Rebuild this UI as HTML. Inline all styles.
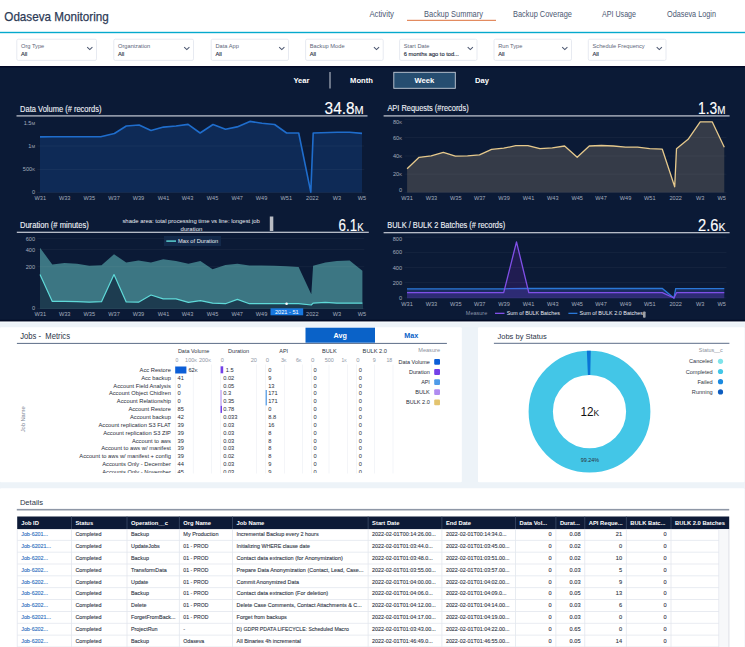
<!DOCTYPE html>
<html><head><meta charset="utf-8"><style>
html,body{margin:0;padding:0;width:745px;height:647px;overflow:hidden;background:#fff}
svg{position:absolute;left:0;top:0;font-family:"Liberation Sans", sans-serif}
</style></head><body>
<svg width="745" height="647" viewBox="0 0 745 647">
<rect x="0" y="0" width="745" height="66" fill="#ffffff"/>
<text x="4.3" y="21" font-size="13.4" fill="#2c3a56" text-anchor="start" font-weight="normal" stroke="#2c3a56" stroke-width="0.25" textLength="104.5" lengthAdjust="spacingAndGlyphs">Odaseva Monitoring</text>
<text x="369.4" y="17" font-size="8.2" fill="#4b5873" text-anchor="start" font-weight="normal"  textLength="24.6" lengthAdjust="spacingAndGlyphs">Activity</text>
<text x="424" y="17" font-size="8.2" fill="#4b5873" text-anchor="start" font-weight="normal"  textLength="59" lengthAdjust="spacingAndGlyphs">Backup Summary</text>
<text x="513" y="17" font-size="8.2" fill="#4b5873" text-anchor="start" font-weight="normal"  textLength="59" lengthAdjust="spacingAndGlyphs">Backup Coverage</text>
<text x="602" y="17" font-size="8.2" fill="#4b5873" text-anchor="start" font-weight="normal"  textLength="34" lengthAdjust="spacingAndGlyphs">API Usage</text>
<text x="667" y="17" font-size="8.2" fill="#4b5873" text-anchor="start" font-weight="normal"  textLength="49" lengthAdjust="spacingAndGlyphs">Odaseva Login</text>
<rect x="407" y="19.8" width="89" height="1.1" fill="#e07f4f"/>
<rect x="0" y="31.8" width="745" height="1.4" fill="#05a9cd"/>
<rect x="16.8" y="39.2" width="79.7" height="21.2" rx="1.5" fill="#fff" stroke="#e4e8ef" stroke-width="0.9"/>
<text x="21" y="48" font-size="5.7" fill="#5c6579" text-anchor="start" font-weight="normal" >Org Type</text>
<text x="21" y="55.6" font-size="5.7" fill="#2d3548" text-anchor="start" font-weight="normal" stroke="#2d3548" stroke-width="0.15">All</text>
<path d="M87.2 47.2 L89.8 49.6 L92.39999999999999 47.2" fill="none" stroke="#4b5670" stroke-width="1.05"/>
<rect x="113.8" y="39.2" width="79.7" height="21.2" rx="1.5" fill="#fff" stroke="#e4e8ef" stroke-width="0.9"/>
<text x="118" y="48" font-size="5.7" fill="#5c6579" text-anchor="start" font-weight="normal" >Organization</text>
<text x="118" y="55.6" font-size="5.7" fill="#2d3548" text-anchor="start" font-weight="normal" stroke="#2d3548" stroke-width="0.15">All</text>
<path d="M184.20000000000002 47.2 L186.8 49.6 L189.4 47.2" fill="none" stroke="#4b5670" stroke-width="1.05"/>
<rect x="211.20000000000002" y="39.2" width="77.3" height="21.2" rx="1.5" fill="#fff" stroke="#e4e8ef" stroke-width="0.9"/>
<text x="215.4" y="48" font-size="5.7" fill="#5c6579" text-anchor="start" font-weight="normal" >Data App</text>
<text x="215.4" y="55.6" font-size="5.7" fill="#2d3548" text-anchor="start" font-weight="normal" stroke="#2d3548" stroke-width="0.15">All</text>
<path d="M279.2 47.2 L281.8 49.6 L284.40000000000003 47.2" fill="none" stroke="#4b5670" stroke-width="1.05"/>
<rect x="305.6" y="39.2" width="77.59999999999998" height="21.2" rx="1.5" fill="#fff" stroke="#e4e8ef" stroke-width="0.9"/>
<text x="309.8" y="48" font-size="5.7" fill="#5c6579" text-anchor="start" font-weight="normal" >Backup Mode</text>
<text x="309.8" y="55.6" font-size="5.7" fill="#2d3548" text-anchor="start" font-weight="normal" stroke="#2d3548" stroke-width="0.15">All</text>
<path d="M373.9 47.2 L376.5 49.6 L379.1 47.2" fill="none" stroke="#4b5670" stroke-width="1.05"/>
<rect x="399.6" y="39.2" width="77.39999999999999" height="21.2" rx="1.5" fill="#fff" stroke="#e4e8ef" stroke-width="0.9"/>
<text x="403.8" y="48" font-size="5.7" fill="#5c6579" text-anchor="start" font-weight="normal" >Start Date</text>
<text x="403.8" y="55.6" font-size="5.7" fill="#2d3548" text-anchor="start" font-weight="normal" stroke="#2d3548" stroke-width="0.15">6 months ago to tod...</text>
<path d="M467.7 47.2 L470.3 49.6 L472.90000000000003 47.2" fill="none" stroke="#4b5670" stroke-width="1.05"/>
<rect x="494.0" y="39.2" width="77.50000000000001" height="21.2" rx="1.5" fill="#fff" stroke="#e4e8ef" stroke-width="0.9"/>
<text x="498.2" y="48" font-size="5.7" fill="#5c6579" text-anchor="start" font-weight="normal" >Run Type</text>
<text x="498.2" y="55.6" font-size="5.7" fill="#2d3548" text-anchor="start" font-weight="normal" stroke="#2d3548" stroke-width="0.15">All</text>
<path d="M562.1999999999999 47.2 L564.8 49.6 L567.4 47.2" fill="none" stroke="#4b5670" stroke-width="1.05"/>
<rect x="588.3" y="39.2" width="77.7" height="21.2" rx="1.5" fill="#fff" stroke="#e4e8ef" stroke-width="0.9"/>
<text x="592.5" y="48" font-size="5.7" fill="#5c6579" text-anchor="start" font-weight="normal" >Schedule Frequency</text>
<text x="592.5" y="55.6" font-size="5.7" fill="#2d3548" text-anchor="start" font-weight="normal" stroke="#2d3548" stroke-width="0.15">All</text>
<path d="M656.6999999999999 47.2 L659.3 49.6 L661.9 47.2" fill="none" stroke="#4b5670" stroke-width="1.05"/>
<rect x="0" y="66.5" width="745" height="255" fill="#0b1a36"/>
<rect x="0" y="66" width="745" height="1.5" fill="#020826"/>
<text x="301.5" y="82.8" font-size="7.6" fill="#ffffff" text-anchor="middle" font-weight="bold" >Year</text>
<rect x="329.5" y="72" width="1" height="16.5" fill="#c9ced8"/>
<text x="361.5" y="82.8" font-size="7.6" fill="#ffffff" text-anchor="middle" font-weight="bold" >Month</text>
<rect x="393.8" y="72.3" width="61.5" height="16" fill="#264d70" stroke="#c4ccd8" stroke-width="0.9"/>
<text x="424.3" y="82.8" font-size="7.6" fill="#ffffff" text-anchor="middle" font-weight="bold" >Week</text>
<text x="482" y="82.8" font-size="7.6" fill="#ffffff" text-anchor="middle" font-weight="bold" >Day</text>
<text x="20.1" y="111.5" font-size="8.2" fill="#eef1f6" text-anchor="start" font-weight="normal" stroke="#eef1f6" stroke-width="0.12" textLength="81.4" lengthAdjust="spacingAndGlyphs">Data Volume (# records)</text>
<text x="324.6" y="114" font-size="15.8" fill="#ffffff" text-anchor="start" font-weight="normal" stroke="#ffffff" stroke-width="0.15" textLength="39.1" lengthAdjust="spacingAndGlyphs">34.8<tspan font-size="11.2">M</tspan></text>
<rect x="16.5" y="115.3" width="351" height="1.2" fill="#c8ccd6"/>
<text x="35" y="124.5" font-size="5.6" fill="#a3acbd" text-anchor="end" font-weight="normal" >1.5<tspan font-size="4.3">M</tspan></text>
<text x="35" y="148" font-size="5.6" fill="#a3acbd" text-anchor="end" font-weight="normal" >1<tspan font-size="4.3">M</tspan></text>
<text x="35" y="171.3" font-size="5.6" fill="#a3acbd" text-anchor="end" font-weight="normal" >500<tspan font-size="4.3">K</tspan></text>
<text x="35" y="194.2" font-size="5.6" fill="#a3acbd" text-anchor="end" font-weight="normal" >0</text>
<text x="40.3" y="200" font-size="5.6" fill="#a3acbd" text-anchor="middle" font-weight="normal" >W31</text>
<text x="64.7" y="200" font-size="5.6" fill="#a3acbd" text-anchor="middle" font-weight="normal" >W33</text>
<text x="89.3" y="200" font-size="5.6" fill="#a3acbd" text-anchor="middle" font-weight="normal" >W35</text>
<text x="114" y="200" font-size="5.6" fill="#a3acbd" text-anchor="middle" font-weight="normal" >W37</text>
<text x="138.4" y="200" font-size="5.6" fill="#a3acbd" text-anchor="middle" font-weight="normal" >W39</text>
<text x="163.5" y="200" font-size="5.6" fill="#a3acbd" text-anchor="middle" font-weight="normal" >W41</text>
<text x="187.5" y="200" font-size="5.6" fill="#a3acbd" text-anchor="middle" font-weight="normal" >W43</text>
<text x="212.6" y="200" font-size="5.6" fill="#a3acbd" text-anchor="middle" font-weight="normal" >W45</text>
<text x="237.2" y="200" font-size="5.6" fill="#a3acbd" text-anchor="middle" font-weight="normal" >W47</text>
<text x="261.6" y="200" font-size="5.6" fill="#a3acbd" text-anchor="middle" font-weight="normal" >W49</text>
<text x="286.3" y="200" font-size="5.6" fill="#a3acbd" text-anchor="middle" font-weight="normal" >W51</text>
<text x="312.3" y="200" font-size="5.6" fill="#a3acbd" text-anchor="middle" font-weight="normal" >2022</text>
<text x="336.9" y="200" font-size="5.6" fill="#a3acbd" text-anchor="middle" font-weight="normal" >W3</text>
<text x="362" y="200" font-size="5.6" fill="#a3acbd" text-anchor="middle" font-weight="normal" >W5</text>
<polygon points="40.0,136.9 52.3,136.8 64.7,136.7 77.0,136.7 89.4,136.7 100.7,136.7 114.4,133.5 126.3,126.0 139.1,125.0 151.0,130.5 163.5,127.1 176.0,126.0 188.1,124.4 200.1,133.0 213.0,124.5 225.5,129.3 237.1,126.9 249.9,121.4 262.0,123.3 274.6,124.5 286.6,133.0 298.7,133.0 310.8,192.1 313.2,133.0 337.4,132.2 349.5,132.2 362.0,133.4 362,192.5 40,192.5" fill="#0e2a56"/>
<rect x="37.3" y="145.65" width="327" height="0.7" fill="#ffffff" fill-opacity="0.06"/>
<rect x="37.3" y="169.15" width="327" height="0.7" fill="#ffffff" fill-opacity="0.06"/>
<rect x="37.3" y="192.05" width="327" height="0.7" fill="#ffffff" fill-opacity="0.06"/>
<polyline points="40.0,136.9 52.3,136.8 64.7,136.7 77.0,136.7 89.4,136.7 100.7,136.7 114.4,133.5 126.3,126.0 139.1,125.0 151.0,130.5 163.5,127.1 176.0,126.0 188.1,124.4 200.1,133.0 213.0,124.5 225.5,129.3 237.1,126.9 249.9,121.4 262.0,123.3 274.6,124.5 286.6,133.0 298.7,133.0 310.8,192.1 313.2,133.0 337.4,132.2 349.5,132.2 362.0,133.4" fill="none" stroke="#1f6dcc" stroke-width="1.6" stroke-linejoin="round"/>
<text x="387.4" y="111.1" font-size="8.2" fill="#eef1f6" text-anchor="start" font-weight="normal" stroke="#eef1f6" stroke-width="0.12" textLength="81.3" lengthAdjust="spacingAndGlyphs">API Requests (#records)</text>
<text x="698" y="114" font-size="15.8" fill="#ffffff" text-anchor="start" font-weight="normal" stroke="#ffffff" stroke-width="0.15" textLength="27.4" lengthAdjust="spacingAndGlyphs">1.3<tspan font-size="11.2">M</tspan></text>
<rect x="383.6" y="115.3" width="346" height="1.2" fill="#c8ccd6"/>
<text x="402" y="124" font-size="5.6" fill="#a3acbd" text-anchor="end" font-weight="normal" >80<tspan font-size="4.3">K</tspan></text>
<text x="402" y="140" font-size="5.6" fill="#a3acbd" text-anchor="end" font-weight="normal" >60<tspan font-size="4.3">K</tspan></text>
<text x="402" y="158" font-size="5.6" fill="#a3acbd" text-anchor="end" font-weight="normal" >40<tspan font-size="4.3">K</tspan></text>
<text x="402" y="176.3" font-size="5.6" fill="#a3acbd" text-anchor="end" font-weight="normal" >20<tspan font-size="4.3">K</tspan></text>
<text x="402" y="191.8" font-size="5.6" fill="#a3acbd" text-anchor="end" font-weight="normal" >0</text>
<text x="407.1" y="200" font-size="5.6" fill="#a3acbd" text-anchor="middle" font-weight="normal" >W31</text>
<text x="431.4" y="200" font-size="5.6" fill="#a3acbd" text-anchor="middle" font-weight="normal" >W33</text>
<text x="455.8" y="200" font-size="5.6" fill="#a3acbd" text-anchor="middle" font-weight="normal" >W35</text>
<text x="479.7" y="200" font-size="5.6" fill="#a3acbd" text-anchor="middle" font-weight="normal" >W37</text>
<text x="504.1" y="200" font-size="5.6" fill="#a3acbd" text-anchor="middle" font-weight="normal" >W39</text>
<text x="528.5" y="200" font-size="5.6" fill="#a3acbd" text-anchor="middle" font-weight="normal" >W41</text>
<text x="552.8" y="200" font-size="5.6" fill="#a3acbd" text-anchor="middle" font-weight="normal" >W43</text>
<text x="577.2" y="200" font-size="5.6" fill="#a3acbd" text-anchor="middle" font-weight="normal" >W45</text>
<text x="601.1" y="200" font-size="5.6" fill="#a3acbd" text-anchor="middle" font-weight="normal" >W47</text>
<text x="625.5" y="200" font-size="5.6" fill="#a3acbd" text-anchor="middle" font-weight="normal" >W49</text>
<text x="649.8" y="200" font-size="5.6" fill="#a3acbd" text-anchor="middle" font-weight="normal" >W51</text>
<text x="675.7" y="200" font-size="5.6" fill="#a3acbd" text-anchor="middle" font-weight="normal" >2022</text>
<text x="700.1" y="200" font-size="5.6" fill="#a3acbd" text-anchor="middle" font-weight="normal" >W3</text>
<text x="721.8" y="200" font-size="5.6" fill="#a3acbd" text-anchor="middle" font-weight="normal" >W5</text>
<polygon points="407.1,168.7 419.1,157.3 431.2,155.9 443.3,152.3 455.4,156.1 467.5,155.9 479.5,154.9 491.6,149.4 503.7,148.2 515.8,145.7 527.9,145.7 539.9,148.6 552.3,147.9 564.6,146.0 577.2,157.3 589.3,146.0 601.4,145.5 613.5,146.0 625.5,147.1 637.6,147.1 649.7,148.7 662.3,149.2 674.7,186.8 676.5,148.7 688.1,139.3 700.2,121.8 712.2,121.8 724.3,147.3 724.3,192.5 407.1,192.5" fill="#353b48"/>
<rect x="404.5" y="118.85000000000001" width="322" height="0.7" fill="#ffffff" fill-opacity="0.06"/>
<rect x="404.5" y="137.15" width="322" height="0.7" fill="#ffffff" fill-opacity="0.06"/>
<rect x="404.5" y="155.65" width="322" height="0.7" fill="#ffffff" fill-opacity="0.06"/>
<rect x="404.5" y="173.75" width="322" height="0.7" fill="#ffffff" fill-opacity="0.06"/>
<rect x="404.5" y="191.85" width="322" height="0.7" fill="#ffffff" fill-opacity="0.06"/>
<polyline points="407.1,168.7 419.1,157.3 431.2,155.9 443.3,152.3 455.4,156.1 467.5,155.9 479.5,154.9 491.6,149.4 503.7,148.2 515.8,145.7 527.9,145.7 539.9,148.6 552.3,147.9 564.6,146.0 577.2,157.3 589.3,146.0 601.4,145.5 613.5,146.0 625.5,147.1 637.6,147.1 649.7,148.7 662.3,149.2 674.7,186.8 676.5,148.7 688.1,139.3 700.2,121.8 712.2,121.8 724.3,147.3" fill="none" stroke="#e6c98c" stroke-width="1.3" stroke-linejoin="round"/>
<text x="19.9" y="228" font-size="8.2" fill="#eef1f6" text-anchor="start" font-weight="normal" stroke="#eef1f6" stroke-width="0.12" textLength="68.9" lengthAdjust="spacingAndGlyphs">Duration (# minutes)</text>
<text x="338.6" y="230.5" font-size="15.8" fill="#ffffff" text-anchor="start" font-weight="normal" stroke="#ffffff" stroke-width="0.15" textLength="25" lengthAdjust="spacingAndGlyphs">6.1<tspan font-size="11.2">K</tspan></text>
<rect x="16.8" y="231.7" width="352" height="1.2" fill="#c8ccd6"/>
<text x="122.4" y="222.8" font-size="5.8" fill="#e8ebf1" text-anchor="start" font-weight="normal"  textLength="137.4" lengthAdjust="spacingAndGlyphs">shade area: total processing time vs line: longest job</text>
<text x="180.6" y="230.7" font-size="5.8" fill="#e8ebf1" text-anchor="start" font-weight="normal"  textLength="21.8" lengthAdjust="spacingAndGlyphs">duration</text>
<rect x="269.8" y="216.5" width="3.5" height="14.5" fill="#b9bcc4"/>
<text x="35" y="240.5" font-size="5.6" fill="#a3acbd" text-anchor="end" font-weight="normal" >600</text>
<text x="35" y="251.8" font-size="5.6" fill="#a3acbd" text-anchor="end" font-weight="normal" >400</text>
<text x="35" y="268.9" font-size="5.6" fill="#a3acbd" text-anchor="end" font-weight="normal" >200</text>
<text x="35" y="310" font-size="5.6" fill="#a3acbd" text-anchor="end" font-weight="normal" >0</text>
<text x="40.3" y="316.3" font-size="5.6" fill="#a3acbd" text-anchor="middle" font-weight="normal" >W31</text>
<text x="64.7" y="316.3" font-size="5.6" fill="#a3acbd" text-anchor="middle" font-weight="normal" >W33</text>
<text x="89.3" y="316.3" font-size="5.6" fill="#a3acbd" text-anchor="middle" font-weight="normal" >W35</text>
<text x="114" y="316.3" font-size="5.6" fill="#a3acbd" text-anchor="middle" font-weight="normal" >W37</text>
<text x="138.4" y="316.3" font-size="5.6" fill="#a3acbd" text-anchor="middle" font-weight="normal" >W39</text>
<text x="163.5" y="316.3" font-size="5.6" fill="#a3acbd" text-anchor="middle" font-weight="normal" >W41</text>
<text x="187.5" y="316.3" font-size="5.6" fill="#a3acbd" text-anchor="middle" font-weight="normal" >W43</text>
<text x="212.6" y="316.3" font-size="5.6" fill="#a3acbd" text-anchor="middle" font-weight="normal" >W45</text>
<text x="237.2" y="316.3" font-size="5.6" fill="#a3acbd" text-anchor="middle" font-weight="normal" >W47</text>
<text x="261.6" y="316.3" font-size="5.6" fill="#a3acbd" text-anchor="middle" font-weight="normal" >W49</text>
<text x="312.3" y="316.3" font-size="5.6" fill="#a3acbd" text-anchor="middle" font-weight="normal" >2022</text>
<text x="336.9" y="316.3" font-size="5.6" fill="#a3acbd" text-anchor="middle" font-weight="normal" >W3</text>
<text x="362" y="316.3" font-size="5.6" fill="#a3acbd" text-anchor="middle" font-weight="normal" >W5</text>
<polygon points="40.0,247.8 52.3,264.4 64.5,263.1 77.0,263.7 89.3,265.7 101.5,265.2 114.0,254.2 126.2,262.4 138.5,260.6 151.0,262.4 163.2,259.3 176.0,261.1 188.4,263.7 200.4,261.1 212.6,269.3 225.4,265.0 237.4,263.7 249.4,265.4 261.6,265.4 274.4,265.7 286.6,266.2 298.6,267.0 311.3,294.3 313.1,265.7 325.4,262.4 336.8,261.1 349.6,260.6 362.4,270.8 362.4,309 40,309" fill="#3c7683"/>
<polygon points="40.0,274.6 52.3,301.4 64.5,301.4 77.0,301.7 89.3,302.2 101.5,301.7 114.0,274.6 126.2,301.9 138.5,302.2 151.0,295.0 163.2,298.9 176.0,298.9 188.4,302.4 200.4,300.6 212.6,303.2 225.4,303.7 237.4,299.4 249.4,303.7 261.6,303.7 274.4,303.7 286.6,303.7 298.6,303.7 311.3,305.0 313.1,303.2 325.4,302.4 336.8,303.2 349.6,303.2 362.4,303.2 362.4,309 40,309" fill="#1d3c50"/>
<rect x="37.3" y="237.95000000000002" width="327" height="0.7" fill="#ffffff" fill-opacity="0.06"/>
<rect x="37.3" y="249.25" width="327" height="0.7" fill="#ffffff" fill-opacity="0.06"/>
<rect x="37.3" y="266.45" width="327" height="0.7" fill="#ffffff" fill-opacity="0.06"/>
<rect x="37.3" y="308.25" width="327" height="0.7" fill="#ffffff" fill-opacity="0.06"/>
<polyline points="40.0,274.6 52.3,301.4 64.5,301.4 77.0,301.7 89.3,302.2 101.5,301.7 114.0,274.6 126.2,301.9 138.5,302.2 151.0,295.0 163.2,298.9 176.0,298.9 188.4,302.4 200.4,300.6 212.6,303.2 225.4,303.7 237.4,299.4 249.4,303.7 261.6,303.7 274.4,303.7 286.6,303.7 298.6,303.7 311.3,305.0 313.1,303.2 325.4,302.4 336.8,303.2 349.6,303.2 362.4,303.2" fill="none" stroke="#5fdad9" stroke-width="1.2" stroke-linejoin="round"/>
<circle cx="286.6" cy="303.7" r="1.3" fill="#ffffff"/>
<rect x="164" y="236" width="57" height="10" fill="#13294a"/>
<rect x="166.3" y="240.4" width="9.7" height="1.4" fill="#5fdad9"/>
<text x="178" y="243" font-size="5.8" fill="#e8ebf1" text-anchor="start" font-weight="normal"  textLength="40.3" lengthAdjust="spacingAndGlyphs">Max of Duration</text>
<rect x="270.5" y="308.3" width="32.7" height="7" fill="#1778e0"/>
<text x="286.8" y="313.9" font-size="5.6" fill="#ffffff" text-anchor="middle" font-weight="normal" >2021 - 51</text>
<text x="387.2" y="228.1" font-size="8.2" fill="#eef1f6" text-anchor="start" font-weight="normal" stroke="#eef1f6" stroke-width="0.12" textLength="118" lengthAdjust="spacingAndGlyphs">BULK / BULK 2 Batches (# records)</text>
<text x="698" y="230.7" font-size="15.8" fill="#ffffff" text-anchor="start" font-weight="normal" stroke="#ffffff" stroke-width="0.15" textLength="27.4" lengthAdjust="spacingAndGlyphs">2.6<tspan font-size="11.2">K</tspan></text>
<rect x="383.6" y="232.1" width="346" height="1.2" fill="#c8ccd6"/>
<text x="402" y="240.5" font-size="5.6" fill="#a3acbd" text-anchor="end" font-weight="normal" >800</text>
<text x="402" y="253.8" font-size="5.6" fill="#a3acbd" text-anchor="end" font-weight="normal" >600</text>
<text x="402" y="269.5" font-size="5.6" fill="#a3acbd" text-anchor="end" font-weight="normal" >400</text>
<text x="402" y="285" font-size="5.6" fill="#a3acbd" text-anchor="end" font-weight="normal" >200</text>
<text x="402" y="299.5" font-size="5.6" fill="#a3acbd" text-anchor="end" font-weight="normal" >0</text>
<text x="407.1" y="305.5" font-size="5.6" fill="#a3acbd" text-anchor="middle" font-weight="normal" >W31</text>
<text x="431.4" y="305.5" font-size="5.6" fill="#a3acbd" text-anchor="middle" font-weight="normal" >W33</text>
<text x="455.8" y="305.5" font-size="5.6" fill="#a3acbd" text-anchor="middle" font-weight="normal" >W35</text>
<text x="479.7" y="305.5" font-size="5.6" fill="#a3acbd" text-anchor="middle" font-weight="normal" >W37</text>
<text x="504.1" y="305.5" font-size="5.6" fill="#a3acbd" text-anchor="middle" font-weight="normal" >W39</text>
<text x="528.5" y="305.5" font-size="5.6" fill="#a3acbd" text-anchor="middle" font-weight="normal" >W41</text>
<text x="552.8" y="305.5" font-size="5.6" fill="#a3acbd" text-anchor="middle" font-weight="normal" >W43</text>
<text x="577.2" y="305.5" font-size="5.6" fill="#a3acbd" text-anchor="middle" font-weight="normal" >W45</text>
<text x="601.1" y="305.5" font-size="5.6" fill="#a3acbd" text-anchor="middle" font-weight="normal" >W47</text>
<text x="625.5" y="305.5" font-size="5.6" fill="#a3acbd" text-anchor="middle" font-weight="normal" >W49</text>
<text x="649.8" y="305.5" font-size="5.6" fill="#a3acbd" text-anchor="middle" font-weight="normal" >W51</text>
<text x="675.7" y="305.5" font-size="5.6" fill="#a3acbd" text-anchor="middle" font-weight="normal" >2022</text>
<text x="700.1" y="305.5" font-size="5.6" fill="#a3acbd" text-anchor="middle" font-weight="normal" >W3</text>
<text x="721.8" y="305.5" font-size="5.6" fill="#a3acbd" text-anchor="middle" font-weight="normal" >W5</text>
<polygon points="407.0,288.8 503.7,288.8 527.9,288.3 662.3,288.5 673.9,298.0 675.7,288.7 724.3,288.7 724.3,298.2 407,298.2" fill="#1a2c5e"/>
<polyline points="407.0,288.8 503.7,288.8 527.9,288.3 662.3,288.5 673.9,298.0 675.7,288.7 724.3,288.7" fill="none" stroke="#2a78d8" stroke-width="1.3"/>
<polygon points="407.0,292.6 503.7,292.6 516.5,241.9 528.8,292.6 662.3,292.6 673.9,298.0 676.5,292.7 724.3,292.7 724.3,298.2 407,298.2" fill="#9a28f0" fill-opacity="0.15"/>
<rect x="404.5" y="236.75" width="322" height="0.7" fill="#ffffff" fill-opacity="0.06"/>
<rect x="404.5" y="251.95000000000002" width="322" height="0.7" fill="#ffffff" fill-opacity="0.06"/>
<rect x="404.5" y="267.15" width="322" height="0.7" fill="#ffffff" fill-opacity="0.06"/>
<rect x="404.5" y="282.34999999999997" width="322" height="0.7" fill="#ffffff" fill-opacity="0.06"/>
<rect x="404.5" y="297.54999999999995" width="322" height="0.7" fill="#ffffff" fill-opacity="0.06"/>
<polyline points="407.0,292.6 503.7,292.6 516.5,241.9 528.8,292.6 662.3,292.6 673.9,298.0 676.5,292.7 724.3,292.7" fill="none" stroke="#8050e8" stroke-width="1.3" stroke-linejoin="round"/>
<text x="476.5" y="315.3" font-size="5.5" fill="#8a93a8" text-anchor="middle" font-weight="normal" >Measure</text>
<rect x="495" y="312.7" width="9.5" height="1.3" fill="#8050e8"/>
<text x="506.8" y="315.3" font-size="5.6" fill="#e8ebf1" text-anchor="start" font-weight="normal"  textLength="53" lengthAdjust="spacingAndGlyphs">Sum of BULK Batches</text>
<rect x="568.4" y="312.7" width="9" height="1.3" fill="#2a78d8"/>
<text x="579.5" y="315.3" font-size="5.6" fill="#e8ebf1" text-anchor="start" font-weight="normal"  textLength="63.5" lengthAdjust="spacingAndGlyphs">Sum of BULK 2.0 Batches</text>
<rect x="643" y="311.5" width="2.6" height="6.2" rx="0.8" fill="#9ea2aa"/>
<rect x="0" y="321.4" width="745" height="325.6" fill="#edf3f8"/>
<rect x="0" y="321.4" width="745" height="1" fill="#ffffff"/>
<rect x="0" y="319.8" width="745" height="1.6" fill="#030b24"/>
<rect x="0" y="327.3" width="461.8" height="154.9" rx="1" fill="#ffffff"/>
<rect x="478" y="327.3" width="266.5" height="154.9" rx="1" fill="#ffffff"/>
<rect x="0" y="488.2" width="744.5" height="160" rx="1" fill="#ffffff"/>
<text x="20.3" y="338.6" font-size="8.2" fill="#2c3548" text-anchor="start" font-weight="normal"  textLength="49.7" lengthAdjust="spacingAndGlyphs">Jobs -&#160; Metrics</text>
<rect x="16.9" y="342.9" width="430" height="1" fill="#5c6d88"/>
<rect x="305.5" y="327.7" width="69.5" height="15" fill="#0a62c8"/>
<text x="340.2" y="337.6" font-size="7.2" fill="#ffffff" text-anchor="middle" font-weight="bold" >Avg</text>
<text x="411.3" y="337.6" font-size="7.2" fill="#0a62c8" text-anchor="middle" font-weight="bold" >Max</text>
<text x="177.9" y="352.9" font-size="5.6" fill="#2f3645" text-anchor="start" font-weight="normal"  textLength="31.4" lengthAdjust="spacingAndGlyphs">Data Volume</text>
<rect x="174.89999999999998" y="364.5" width="0.6" height="109" fill="#eceef3"/>
<rect x="192.89999999999998" y="364.5" width="0.6" height="109" fill="#eceef3"/>
<rect x="211.39999999999998" y="364.5" width="0.6" height="109" fill="#eceef3"/>
<text x="228" y="352.9" font-size="5.6" fill="#2f3645" text-anchor="start" font-weight="normal"  textLength="21.1" lengthAdjust="spacingAndGlyphs">Duration</text>
<rect x="220.2" y="364.5" width="0.6" height="109" fill="#eceef3"/>
<rect x="256.3" y="364.5" width="0.6" height="109" fill="#eceef3"/>
<text x="279.3" y="352.9" font-size="5.6" fill="#2f3645" text-anchor="start" font-weight="normal"  textLength="8.8" lengthAdjust="spacingAndGlyphs">API</text>
<rect x="265.4" y="364.5" width="0.6" height="109" fill="#eceef3"/>
<rect x="284.3" y="364.5" width="0.6" height="109" fill="#eceef3"/>
<rect x="302.2" y="364.5" width="0.6" height="109" fill="#eceef3"/>
<text x="322.1" y="352.9" font-size="5.6" fill="#2f3645" text-anchor="start" font-weight="normal"  textLength="14.6" lengthAdjust="spacingAndGlyphs">BULK</text>
<rect x="311.2" y="364.5" width="0.6" height="109" fill="#eceef3"/>
<rect x="328.7" y="364.5" width="0.6" height="109" fill="#eceef3"/>
<rect x="347.3" y="364.5" width="0.6" height="109" fill="#eceef3"/>
<text x="362.6" y="352.9" font-size="5.6" fill="#2f3645" text-anchor="start" font-weight="normal"  textLength="24.4" lengthAdjust="spacingAndGlyphs">BULK 2.0</text>
<rect x="356.2" y="364.5" width="0.6" height="109" fill="#eceef3"/>
<rect x="374.4" y="364.5" width="0.6" height="109" fill="#eceef3"/>
<rect x="392.7" y="364.5" width="0.6" height="109" fill="#eceef3"/>
<text x="175.4" y="362.3" font-size="5.3" fill="#8e96a5" text-anchor="start" font-weight="normal"  textLength="2.8" lengthAdjust="spacingAndGlyphs">0</text>
<text x="185.1" y="362.3" font-size="5.3" fill="#8e96a5" text-anchor="start" font-weight="normal"  textLength="12.1" lengthAdjust="spacingAndGlyphs">100<tspan font-size="4.2">K</tspan></text>
<text x="199" y="362.3" font-size="5.3" fill="#8e96a5" text-anchor="start" font-weight="normal"  textLength="12.1" lengthAdjust="spacingAndGlyphs">200<tspan font-size="4.2">K</tspan></text>
<text x="220.7" y="362.3" font-size="5.3" fill="#8e96a5" text-anchor="start" font-weight="normal"  textLength="3.1" lengthAdjust="spacingAndGlyphs">0</text>
<text x="250.7" y="362.3" font-size="5.3" fill="#8e96a5" text-anchor="start" font-weight="normal"  textLength="6.3" lengthAdjust="spacingAndGlyphs">20</text>
<text x="265.7" y="362.3" font-size="5.3" fill="#8e96a5" text-anchor="start" font-weight="normal"  textLength="3.3" lengthAdjust="spacingAndGlyphs">0</text>
<text x="280.9" y="362.3" font-size="5.3" fill="#8e96a5" text-anchor="start" font-weight="normal"  textLength="5.8" lengthAdjust="spacingAndGlyphs">3<tspan font-size="4.2">K</tspan></text>
<text x="295.9" y="362.3" font-size="5.3" fill="#8e96a5" text-anchor="start" font-weight="normal"  textLength="5.8" lengthAdjust="spacingAndGlyphs">6<tspan font-size="4.2">K</tspan></text>
<text x="311" y="362.3" font-size="5.3" fill="#8e96a5" text-anchor="start" font-weight="normal"  textLength="3.4" lengthAdjust="spacingAndGlyphs">0</text>
<text x="324.7" y="362.3" font-size="5.3" fill="#8e96a5" text-anchor="start" font-weight="normal"  textLength="9.1" lengthAdjust="spacingAndGlyphs">500</text>
<text x="341.6" y="362.3" font-size="5.3" fill="#8e96a5" text-anchor="start" font-weight="normal"  textLength="5.3" lengthAdjust="spacingAndGlyphs">1<tspan font-size="4.2">K</tspan></text>
<text x="356.2" y="362.3" font-size="5.3" fill="#8e96a5" text-anchor="start" font-weight="normal"  textLength="3.3" lengthAdjust="spacingAndGlyphs">0</text>
<text x="372.7" y="362.3" font-size="5.3" fill="#8e96a5" text-anchor="start" font-weight="normal"  textLength="3" lengthAdjust="spacingAndGlyphs">9</text>
<text x="386.4" y="362.3" font-size="5.3" fill="#8e96a5" text-anchor="start" font-weight="normal"  textLength="5.8" lengthAdjust="spacingAndGlyphs">18</text>
<defs><clipPath id="mclip"><rect x="0" y="364" width="460" height="109"/></clipPath></defs>
<g clip-path="url(#mclip)">
<text x="170.9" y="371.85" font-size="5.75" fill="#282d38" text-anchor="end" font-weight="normal" >Acc Restore</text>
<text x="188.4" y="371.85" font-size="5.7" fill="#282d38" text-anchor="start" font-weight="normal" >62<tspan font-size="4.4">K</tspan></text>
<text x="225.8" y="371.85" font-size="5.7" fill="#282d38" text-anchor="start" font-weight="normal" >1.5</text>
<text x="268.2" y="371.85" font-size="5.7" fill="#282d38" text-anchor="start" font-weight="normal" >0</text>
<text x="313.4" y="371.85" font-size="5.7" fill="#282d38" text-anchor="start" font-weight="normal" >0</text>
<text x="358.7" y="371.85" font-size="5.7" fill="#282d38" text-anchor="start" font-weight="normal" >0</text>
<text x="170.9" y="379.70000000000005" font-size="5.75" fill="#282d38" text-anchor="end" font-weight="normal" >Acc backup</text>
<text x="177.5" y="379.70000000000005" font-size="5.7" fill="#282d38" text-anchor="start" font-weight="normal" >41</text>
<text x="223.2" y="379.70000000000005" font-size="5.7" fill="#282d38" text-anchor="start" font-weight="normal" >0.02</text>
<text x="268.2" y="379.70000000000005" font-size="5.7" fill="#282d38" text-anchor="start" font-weight="normal" >9</text>
<text x="313.4" y="379.70000000000005" font-size="5.7" fill="#282d38" text-anchor="start" font-weight="normal" >0</text>
<text x="358.7" y="379.70000000000005" font-size="5.7" fill="#282d38" text-anchor="start" font-weight="normal" >0</text>
<text x="170.9" y="387.55" font-size="5.75" fill="#282d38" text-anchor="end" font-weight="normal" >Account Field Analysis</text>
<text x="177.5" y="387.55" font-size="5.7" fill="#282d38" text-anchor="start" font-weight="normal" >0</text>
<text x="223.2" y="387.55" font-size="5.7" fill="#282d38" text-anchor="start" font-weight="normal" >0.05</text>
<text x="268.2" y="387.55" font-size="5.7" fill="#282d38" text-anchor="start" font-weight="normal" >13</text>
<text x="313.4" y="387.55" font-size="5.7" fill="#282d38" text-anchor="start" font-weight="normal" >0</text>
<text x="358.7" y="387.55" font-size="5.7" fill="#282d38" text-anchor="start" font-weight="normal" >0</text>
<text x="170.9" y="395.40000000000003" font-size="5.75" fill="#282d38" text-anchor="end" font-weight="normal" >Account Object Chidlren</text>
<text x="177.5" y="395.40000000000003" font-size="5.7" fill="#282d38" text-anchor="start" font-weight="normal" >0</text>
<text x="223.2" y="395.40000000000003" font-size="5.7" fill="#282d38" text-anchor="start" font-weight="normal" >0.3</text>
<text x="268.2" y="395.40000000000003" font-size="5.7" fill="#282d38" text-anchor="start" font-weight="normal" >171</text>
<text x="313.4" y="395.40000000000003" font-size="5.7" fill="#282d38" text-anchor="start" font-weight="normal" >0</text>
<text x="358.7" y="395.40000000000003" font-size="5.7" fill="#282d38" text-anchor="start" font-weight="normal" >0</text>
<text x="170.9" y="403.25" font-size="5.75" fill="#282d38" text-anchor="end" font-weight="normal" >Account Relationship</text>
<text x="177.5" y="403.25" font-size="5.7" fill="#282d38" text-anchor="start" font-weight="normal" >0</text>
<text x="223.2" y="403.25" font-size="5.7" fill="#282d38" text-anchor="start" font-weight="normal" >0.35</text>
<text x="268.2" y="403.25" font-size="5.7" fill="#282d38" text-anchor="start" font-weight="normal" >171</text>
<text x="313.4" y="403.25" font-size="5.7" fill="#282d38" text-anchor="start" font-weight="normal" >0</text>
<text x="358.7" y="403.25" font-size="5.7" fill="#282d38" text-anchor="start" font-weight="normal" >0</text>
<text x="170.9" y="411.1" font-size="5.75" fill="#282d38" text-anchor="end" font-weight="normal" >Account Restore</text>
<text x="177.5" y="411.1" font-size="5.7" fill="#282d38" text-anchor="start" font-weight="normal" >85</text>
<text x="223.2" y="411.1" font-size="5.7" fill="#282d38" text-anchor="start" font-weight="normal" >0.78</text>
<text x="268.2" y="411.1" font-size="5.7" fill="#282d38" text-anchor="start" font-weight="normal" >0</text>
<text x="313.4" y="411.1" font-size="5.7" fill="#282d38" text-anchor="start" font-weight="normal" >0</text>
<text x="358.7" y="411.1" font-size="5.7" fill="#282d38" text-anchor="start" font-weight="normal" >0</text>
<text x="170.9" y="418.95" font-size="5.75" fill="#282d38" text-anchor="end" font-weight="normal" >Account backup</text>
<text x="177.5" y="418.95" font-size="5.7" fill="#282d38" text-anchor="start" font-weight="normal" >42</text>
<text x="223.2" y="418.95" font-size="5.7" fill="#282d38" text-anchor="start" font-weight="normal" >0.033</text>
<text x="268.2" y="418.95" font-size="5.7" fill="#282d38" text-anchor="start" font-weight="normal" >8.8</text>
<text x="313.4" y="418.95" font-size="5.7" fill="#282d38" text-anchor="start" font-weight="normal" >0</text>
<text x="358.7" y="418.95" font-size="5.7" fill="#282d38" text-anchor="start" font-weight="normal" >0</text>
<text x="170.9" y="426.8" font-size="5.75" fill="#282d38" text-anchor="end" font-weight="normal" >Account replication S3 FLAT</text>
<text x="177.5" y="426.8" font-size="5.7" fill="#282d38" text-anchor="start" font-weight="normal" >39</text>
<text x="223.2" y="426.8" font-size="5.7" fill="#282d38" text-anchor="start" font-weight="normal" >0.03</text>
<text x="268.2" y="426.8" font-size="5.7" fill="#282d38" text-anchor="start" font-weight="normal" >16</text>
<text x="313.4" y="426.8" font-size="5.7" fill="#282d38" text-anchor="start" font-weight="normal" >0</text>
<text x="358.7" y="426.8" font-size="5.7" fill="#282d38" text-anchor="start" font-weight="normal" >0</text>
<text x="170.9" y="434.65000000000003" font-size="5.75" fill="#282d38" text-anchor="end" font-weight="normal" >Account replication S3 ZIP</text>
<text x="177.5" y="434.65000000000003" font-size="5.7" fill="#282d38" text-anchor="start" font-weight="normal" >39</text>
<text x="223.2" y="434.65000000000003" font-size="5.7" fill="#282d38" text-anchor="start" font-weight="normal" >0.03</text>
<text x="268.2" y="434.65000000000003" font-size="5.7" fill="#282d38" text-anchor="start" font-weight="normal" >8</text>
<text x="313.4" y="434.65000000000003" font-size="5.7" fill="#282d38" text-anchor="start" font-weight="normal" >0</text>
<text x="358.7" y="434.65000000000003" font-size="5.7" fill="#282d38" text-anchor="start" font-weight="normal" >0</text>
<text x="170.9" y="442.5" font-size="5.75" fill="#282d38" text-anchor="end" font-weight="normal" >Account to aws</text>
<text x="177.5" y="442.5" font-size="5.7" fill="#282d38" text-anchor="start" font-weight="normal" >39</text>
<text x="223.2" y="442.5" font-size="5.7" fill="#282d38" text-anchor="start" font-weight="normal" >0.03</text>
<text x="268.2" y="442.5" font-size="5.7" fill="#282d38" text-anchor="start" font-weight="normal" >8</text>
<text x="313.4" y="442.5" font-size="5.7" fill="#282d38" text-anchor="start" font-weight="normal" >0</text>
<text x="358.7" y="442.5" font-size="5.7" fill="#282d38" text-anchor="start" font-weight="normal" >0</text>
<text x="170.9" y="450.35" font-size="5.75" fill="#282d38" text-anchor="end" font-weight="normal" >Account to aws w/ manifest</text>
<text x="177.5" y="450.35" font-size="5.7" fill="#282d38" text-anchor="start" font-weight="normal" >39</text>
<text x="223.2" y="450.35" font-size="5.7" fill="#282d38" text-anchor="start" font-weight="normal" >0.03</text>
<text x="268.2" y="450.35" font-size="5.7" fill="#282d38" text-anchor="start" font-weight="normal" >8</text>
<text x="313.4" y="450.35" font-size="5.7" fill="#282d38" text-anchor="start" font-weight="normal" >0</text>
<text x="358.7" y="450.35" font-size="5.7" fill="#282d38" text-anchor="start" font-weight="normal" >0</text>
<text x="170.9" y="458.2" font-size="5.75" fill="#282d38" text-anchor="end" font-weight="normal" >Account to aws w/ manifest + config</text>
<text x="177.5" y="458.2" font-size="5.7" fill="#282d38" text-anchor="start" font-weight="normal" >39</text>
<text x="223.2" y="458.2" font-size="5.7" fill="#282d38" text-anchor="start" font-weight="normal" >0.02</text>
<text x="268.2" y="458.2" font-size="5.7" fill="#282d38" text-anchor="start" font-weight="normal" >8</text>
<text x="313.4" y="458.2" font-size="5.7" fill="#282d38" text-anchor="start" font-weight="normal" >0</text>
<text x="358.7" y="458.2" font-size="5.7" fill="#282d38" text-anchor="start" font-weight="normal" >0</text>
<text x="170.9" y="466.05" font-size="5.75" fill="#282d38" text-anchor="end" font-weight="normal" >Accounts Only - December</text>
<text x="177.5" y="466.05" font-size="5.7" fill="#282d38" text-anchor="start" font-weight="normal" >44</text>
<text x="223.2" y="466.05" font-size="5.7" fill="#282d38" text-anchor="start" font-weight="normal" >0.03</text>
<text x="268.2" y="466.05" font-size="5.7" fill="#282d38" text-anchor="start" font-weight="normal" >9</text>
<text x="313.4" y="466.05" font-size="5.7" fill="#282d38" text-anchor="start" font-weight="normal" >0</text>
<text x="358.7" y="466.05" font-size="5.7" fill="#282d38" text-anchor="start" font-weight="normal" >0</text>
<text x="170.9" y="473.90000000000003" font-size="5.75" fill="#282d38" text-anchor="end" font-weight="normal" >Accounts Only - November</text>
<text x="177.5" y="473.90000000000003" font-size="5.7" fill="#282d38" text-anchor="start" font-weight="normal" >45</text>
<text x="223.2" y="473.90000000000003" font-size="5.7" fill="#282d38" text-anchor="start" font-weight="normal" >0.03</text>
<text x="268.2" y="473.90000000000003" font-size="5.7" fill="#282d38" text-anchor="start" font-weight="normal" >9</text>
<text x="313.4" y="473.90000000000003" font-size="5.7" fill="#282d38" text-anchor="start" font-weight="normal" >0</text>
<text x="358.7" y="473.90000000000003" font-size="5.7" fill="#282d38" text-anchor="start" font-weight="normal" >0</text>
<rect x="175.2" y="366.5" width="11.2" height="7" fill="#0b5ed7"/>
<rect x="220.6" y="366.3" width="2.6" height="7" fill="#7340e8"/>
<rect x="220.5" y="405.6" width="1.5" height="7.3" fill="#7340e8"/>
<rect x="220.4" y="390" width="1.3" height="15.4" fill="#c2a6f4"/>
<rect x="265.6" y="390" width="1.3" height="15.4" fill="#5aa0e8"/>
</g>
<text x="25.2" y="419.3" font-size="5.7" fill="#7e8594" text-anchor="middle" transform="rotate(-90 25.2 419.3)">Job Name</text>
<text x="440" y="352.1" font-size="5.6" fill="#8a909b" text-anchor="end" font-weight="normal" >Measure</text>
<text x="398.5" y="363.95" font-size="5.8" fill="#282d38" text-anchor="start" font-weight="normal"  textLength="31.3" lengthAdjust="spacingAndGlyphs">Data Volume</text>
<rect x="434.2" y="359.0" width="5.8" height="5.8" rx="1" fill="#0b5ed7"/>
<text x="409.0" y="374.05" font-size="5.8" fill="#282d38" text-anchor="start" font-weight="normal"  textLength="20.8" lengthAdjust="spacingAndGlyphs">Duration</text>
<rect x="434.2" y="369.1" width="5.8" height="5.8" rx="1" fill="#7340e8"/>
<text x="421.2" y="384.15" font-size="5.8" fill="#282d38" text-anchor="start" font-weight="normal"  textLength="8.6" lengthAdjust="spacingAndGlyphs">API</text>
<rect x="434.2" y="379.2" width="5.8" height="5.8" rx="1" fill="#4f9be8"/>
<text x="415.2" y="394.25" font-size="5.8" fill="#282d38" text-anchor="start" font-weight="normal"  textLength="14.6" lengthAdjust="spacingAndGlyphs">BULK</text>
<rect x="434.2" y="389.3" width="5.8" height="5.8" rx="1" fill="#b08cf0"/>
<text x="406.0" y="404.34999999999997" font-size="5.8" fill="#282d38" text-anchor="start" font-weight="normal"  textLength="23.8" lengthAdjust="spacingAndGlyphs">BULK 2.0</text>
<rect x="434.2" y="399.4" width="5.8" height="5.8" rx="1" fill="#e3c46f"/>
<text x="497.5" y="338.8" font-size="7.6" fill="#2c3548" text-anchor="start" font-weight="normal"  textLength="49.3" lengthAdjust="spacingAndGlyphs">Jobs by Status</text>
<rect x="493.9" y="342.8" width="235.5" height="1" fill="#5c6d88"/>
<text x="722.8" y="352" font-size="5.4" fill="#8a909b" text-anchor="end" font-weight="normal" >Status__c</text>
<text x="712.7" y="363.3" font-size="5.6" fill="#2f3645" text-anchor="end" font-weight="normal" >Canceled</text>
<circle cx="720.5" cy="361.3" r="2.6" fill="#7fe3ea"/>
<text x="712.7" y="373.5" font-size="5.6" fill="#2f3645" text-anchor="end" font-weight="normal" >Completed</text>
<circle cx="720.5" cy="371.5" r="2.6" fill="#43c6e7"/>
<text x="712.7" y="383.7" font-size="5.6" fill="#2f3645" text-anchor="end" font-weight="normal" >Failed</text>
<circle cx="720.5" cy="381.7" r="2.6" fill="#1a8ae0"/>
<text x="712.7" y="393.90000000000003" font-size="5.6" fill="#2f3645" text-anchor="end" font-weight="normal" >Running</text>
<circle cx="720.5" cy="391.90000000000003" r="2.6" fill="#0c5cbf"/>
<circle cx="589.5" cy="411.6" r="48.75" fill="none" stroke="#43c6e7" stroke-width="24.299999999999997"/>
<path d="M586.84 350.76 A60.9 60.9 0 0 1 590.78 350.71 L590.27 375.01 A36.6 36.6 0 0 0 587.90 375.03 Z" fill="#0a74d6"/>
<text x="580.5" y="415.9" font-size="12.5" fill="#111111" text-anchor="start" font-weight="normal"  textLength="18.7" lengthAdjust="spacingAndGlyphs">12<tspan font-size="9">K</tspan></text>
<text x="590" y="462.2" font-size="5.4" fill="#2a2f3a" text-anchor="middle" font-weight="normal" >99.24%</text>
<text x="19.9" y="505" font-size="7.6" fill="#2c3548" text-anchor="start" font-weight="normal" >Details</text>
<rect x="16.8" y="508.9" width="712.4" height="1.6" fill="#8e97a6"/>
<rect x="17.2" y="516.5" width="712.0" height="12.6" fill="#0d1a36"/>
<rect x="718.7" y="529.1" width="10.6" height="118" fill="#f7f8fa"/>
<rect x="728.4" y="529.1" width="1" height="118" fill="#dfe2e8"/>
<rect x="718.4" y="529.1" width="0.8" height="118" fill="#e6e8ee"/>
<text x="21.2" y="525" font-size="5.8" fill="#ffffff" text-anchor="start" font-weight="bold" >Job ID</text>
<text x="75.4" y="525" font-size="5.8" fill="#ffffff" text-anchor="start" font-weight="bold" >Status</text>
<rect x="71.0" y="516.5" width="0.8" height="12.6" fill="#3b4a66"/>
<text x="131" y="525" font-size="5.8" fill="#ffffff" text-anchor="start" font-weight="bold" >Operation__c</text>
<rect x="126.6" y="516.5" width="0.8" height="12.6" fill="#3b4a66"/>
<text x="183.3" y="525" font-size="5.8" fill="#ffffff" text-anchor="start" font-weight="bold" >Org Name</text>
<rect x="178.9" y="516.5" width="0.8" height="12.6" fill="#3b4a66"/>
<text x="236.6" y="525" font-size="5.8" fill="#ffffff" text-anchor="start" font-weight="bold" >Job Name</text>
<rect x="232.2" y="516.5" width="0.8" height="12.6" fill="#3b4a66"/>
<text x="372.1" y="525" font-size="5.8" fill="#ffffff" text-anchor="start" font-weight="bold" >Start Date</text>
<rect x="367.70000000000005" y="516.5" width="0.8" height="12.6" fill="#3b4a66"/>
<text x="445.9" y="525" font-size="5.8" fill="#ffffff" text-anchor="start" font-weight="bold" >End Date</text>
<rect x="441.5" y="516.5" width="0.8" height="12.6" fill="#3b4a66"/>
<text x="519.5" y="525" font-size="5.8" fill="#ffffff" text-anchor="start" font-weight="bold" >Data Vol...</text>
<rect x="515.1" y="516.5" width="0.8" height="12.6" fill="#3b4a66"/>
<text x="559.9" y="525" font-size="5.8" fill="#ffffff" text-anchor="start" font-weight="bold" >Durat...</text>
<rect x="555.5" y="516.5" width="0.8" height="12.6" fill="#3b4a66"/>
<text x="588.8" y="525" font-size="5.8" fill="#ffffff" text-anchor="start" font-weight="bold" >API Reque...</text>
<rect x="584.4" y="516.5" width="0.8" height="12.6" fill="#3b4a66"/>
<text x="630.3" y="525" font-size="5.8" fill="#ffffff" text-anchor="start" font-weight="bold" >BULK Batc...</text>
<rect x="625.9" y="516.5" width="0.8" height="12.6" fill="#3b4a66"/>
<text x="675" y="525" font-size="5.8" fill="#ffffff" text-anchor="start" font-weight="bold"  textLength="50" lengthAdjust="spacingAndGlyphs">BULK 2.0 Batches</text>
<rect x="670.6" y="516.5" width="0.8" height="12.6" fill="#3b4a66"/>
<rect x="17.2" y="539.90" width="701.8" height="0.8" fill="#e3e7ee"/>
<text x="21.2" y="536.2" font-size="5.7" fill="#2f6fc0" text-anchor="start" font-weight="normal" stroke="#2f6fc0" stroke-width="0.12" textLength="26.89848" lengthAdjust="spacingAndGlyphs">Job-6201...</text>
<text x="75.4" y="536.2" font-size="5.7" fill="#343b4a" text-anchor="start" font-weight="normal" stroke="#343b4a" stroke-width="0.12" textLength="25.998168" lengthAdjust="spacingAndGlyphs">Completed</text>
<text x="131" y="536.2" font-size="5.7" fill="#343b4a" text-anchor="start" font-weight="normal" stroke="#343b4a" stroke-width="0.12" textLength="17.93148" lengthAdjust="spacingAndGlyphs">Backup</text>
<text x="183.3" y="536.2" font-size="5.7" fill="#343b4a" text-anchor="start" font-weight="normal" stroke="#343b4a" stroke-width="0.12" textLength="35.2" lengthAdjust="spacingAndGlyphs">My Production</text>
<text x="236.6" y="536.2" font-size="5.7" fill="#343b4a" text-anchor="start" font-weight="normal" stroke="#343b4a" stroke-width="0.12" textLength="82" lengthAdjust="spacingAndGlyphs">Incremental Backup every 2 hours</text>
<text x="372.1" y="536.2" font-size="5.7" fill="#343b4a" text-anchor="start" font-weight="normal" stroke="#343b4a" stroke-width="0.12" textLength="63.66444" lengthAdjust="spacingAndGlyphs">2022-02-01T00:14:26.00...</text>
<text x="445.9" y="536.2" font-size="5.7" fill="#343b4a" text-anchor="start" font-weight="normal" stroke="#343b4a" stroke-width="0.12" textLength="60.67454399999999" lengthAdjust="spacingAndGlyphs">2022-02-01T00:14:34.0...</text>
<text x="551.6" y="536.2" font-size="5.6" fill="#343b4a" text-anchor="end" font-weight="normal" stroke="#343b4a" stroke-width="0.12">0</text>
<text x="580.5" y="536.2" font-size="5.6" fill="#343b4a" text-anchor="end" font-weight="normal" stroke="#343b4a" stroke-width="0.12">0.08</text>
<text x="622.0" y="536.2" font-size="5.6" fill="#343b4a" text-anchor="end" font-weight="normal" stroke="#343b4a" stroke-width="0.12">21</text>
<text x="666.7" y="536.2" font-size="5.6" fill="#343b4a" text-anchor="end" font-weight="normal" stroke="#343b4a" stroke-width="0.12">0</text>
<rect x="17.2" y="551.75" width="701.8" height="0.8" fill="#e3e7ee"/>
<text x="21.2" y="548.0500000000001" font-size="5.7" fill="#2f6fc0" text-anchor="start" font-weight="normal" stroke="#2f6fc0" stroke-width="0.12" textLength="29.888375999999997" lengthAdjust="spacingAndGlyphs">Job-62021...</text>
<text x="75.4" y="548.0500000000001" font-size="5.7" fill="#343b4a" text-anchor="start" font-weight="normal" stroke="#343b4a" stroke-width="0.12" textLength="25.998168" lengthAdjust="spacingAndGlyphs">Completed</text>
<text x="131" y="548.0500000000001" font-size="5.7" fill="#343b4a" text-anchor="start" font-weight="normal" stroke="#343b4a" stroke-width="0.12" textLength="28.691375999999998" lengthAdjust="spacingAndGlyphs">UpdateJobs</text>
<text x="183.3" y="548.0500000000001" font-size="5.7" fill="#343b4a" text-anchor="start" font-weight="normal" stroke="#343b4a" stroke-width="0.12" textLength="25.1" lengthAdjust="spacingAndGlyphs">01 - PROD</text>
<text x="236.6" y="548.0500000000001" font-size="5.7" fill="#343b4a" text-anchor="start" font-weight="normal" stroke="#343b4a" stroke-width="0.12" textLength="73.3" lengthAdjust="spacingAndGlyphs">Initializing WHERE clause date</text>
<text x="372.1" y="548.0500000000001" font-size="5.7" fill="#343b4a" text-anchor="start" font-weight="normal" stroke="#343b4a" stroke-width="0.12" textLength="60.67454399999999" lengthAdjust="spacingAndGlyphs">2022-02-01T01:03:44.0...</text>
<text x="445.9" y="548.0500000000001" font-size="5.7" fill="#343b4a" text-anchor="start" font-weight="normal" stroke="#343b4a" stroke-width="0.12" textLength="63.66444" lengthAdjust="spacingAndGlyphs">2022-02-01T01:03:45.00...</text>
<text x="551.6" y="548.0500000000001" font-size="5.6" fill="#343b4a" text-anchor="end" font-weight="normal" stroke="#343b4a" stroke-width="0.12">0</text>
<text x="580.5" y="548.0500000000001" font-size="5.6" fill="#343b4a" text-anchor="end" font-weight="normal" stroke="#343b4a" stroke-width="0.12">0.02</text>
<text x="622.0" y="548.0500000000001" font-size="5.6" fill="#343b4a" text-anchor="end" font-weight="normal" stroke="#343b4a" stroke-width="0.12">0</text>
<text x="666.7" y="548.0500000000001" font-size="5.6" fill="#343b4a" text-anchor="end" font-weight="normal" stroke="#343b4a" stroke-width="0.12">0</text>
<rect x="17.2" y="563.60" width="701.8" height="0.8" fill="#e3e7ee"/>
<text x="21.2" y="559.9000000000001" font-size="5.7" fill="#2f6fc0" text-anchor="start" font-weight="normal" stroke="#2f6fc0" stroke-width="0.12" textLength="26.89848" lengthAdjust="spacingAndGlyphs">Job-6202...</text>
<text x="75.4" y="559.9000000000001" font-size="5.7" fill="#343b4a" text-anchor="start" font-weight="normal" stroke="#343b4a" stroke-width="0.12" textLength="25.998168" lengthAdjust="spacingAndGlyphs">Completed</text>
<text x="131" y="559.9000000000001" font-size="5.7" fill="#343b4a" text-anchor="start" font-weight="normal" stroke="#343b4a" stroke-width="0.12" textLength="17.93148" lengthAdjust="spacingAndGlyphs">Backup</text>
<text x="183.3" y="559.9000000000001" font-size="5.7" fill="#343b4a" text-anchor="start" font-weight="normal" stroke="#343b4a" stroke-width="0.12" textLength="25.1" lengthAdjust="spacingAndGlyphs">01 - PROD</text>
<text x="236.6" y="559.9000000000001" font-size="5.7" fill="#343b4a" text-anchor="start" font-weight="normal" stroke="#343b4a" stroke-width="0.12" textLength="106.3" lengthAdjust="spacingAndGlyphs">Contact data extraction (for Anonymization)</text>
<text x="372.1" y="559.9000000000001" font-size="5.7" fill="#343b4a" text-anchor="start" font-weight="normal" stroke="#343b4a" stroke-width="0.12" textLength="60.67454399999999" lengthAdjust="spacingAndGlyphs">2022-02-01T01:03:48.0...</text>
<text x="445.9" y="559.9000000000001" font-size="5.7" fill="#343b4a" text-anchor="start" font-weight="normal" stroke="#343b4a" stroke-width="0.12" textLength="63.66444" lengthAdjust="spacingAndGlyphs">2022-02-01T01:03:51.00...</text>
<text x="551.6" y="559.9000000000001" font-size="5.6" fill="#343b4a" text-anchor="end" font-weight="normal" stroke="#343b4a" stroke-width="0.12">0</text>
<text x="580.5" y="559.9000000000001" font-size="5.6" fill="#343b4a" text-anchor="end" font-weight="normal" stroke="#343b4a" stroke-width="0.12">0.02</text>
<text x="622.0" y="559.9000000000001" font-size="5.6" fill="#343b4a" text-anchor="end" font-weight="normal" stroke="#343b4a" stroke-width="0.12">10</text>
<text x="666.7" y="559.9000000000001" font-size="5.6" fill="#343b4a" text-anchor="end" font-weight="normal" stroke="#343b4a" stroke-width="0.12">0</text>
<rect x="17.2" y="575.45" width="701.8" height="0.8" fill="#e3e7ee"/>
<text x="21.2" y="571.75" font-size="5.7" fill="#2f6fc0" text-anchor="start" font-weight="normal" stroke="#2f6fc0" stroke-width="0.12" textLength="26.89848" lengthAdjust="spacingAndGlyphs">Job-6202...</text>
<text x="75.4" y="571.75" font-size="5.7" fill="#343b4a" text-anchor="start" font-weight="normal" stroke="#343b4a" stroke-width="0.12" textLength="25.998168" lengthAdjust="spacingAndGlyphs">Completed</text>
<text x="131" y="571.75" font-size="5.7" fill="#343b4a" text-anchor="start" font-weight="normal" stroke="#343b4a" stroke-width="0.12" textLength="35.650355999999995" lengthAdjust="spacingAndGlyphs">TransformData</text>
<text x="183.3" y="571.75" font-size="5.7" fill="#343b4a" text-anchor="start" font-weight="normal" stroke="#343b4a" stroke-width="0.12" textLength="25.1" lengthAdjust="spacingAndGlyphs">01 - PROD</text>
<text x="236.6" y="571.75" font-size="5.7" fill="#343b4a" text-anchor="start" font-weight="normal" stroke="#343b4a" stroke-width="0.12" textLength="126.8" lengthAdjust="spacingAndGlyphs">Prepare Data Anonymization (Contact, Lead, Case...</text>
<text x="372.1" y="571.75" font-size="5.7" fill="#343b4a" text-anchor="start" font-weight="normal" stroke="#343b4a" stroke-width="0.12" textLength="63.66444" lengthAdjust="spacingAndGlyphs">2022-02-01T01:03:55.00...</text>
<text x="445.9" y="571.75" font-size="5.7" fill="#343b4a" text-anchor="start" font-weight="normal" stroke="#343b4a" stroke-width="0.12" textLength="63.66444" lengthAdjust="spacingAndGlyphs">2022-02-01T01:03:57.00...</text>
<text x="551.6" y="571.75" font-size="5.6" fill="#343b4a" text-anchor="end" font-weight="normal" stroke="#343b4a" stroke-width="0.12">0</text>
<text x="580.5" y="571.75" font-size="5.6" fill="#343b4a" text-anchor="end" font-weight="normal" stroke="#343b4a" stroke-width="0.12">0.03</text>
<text x="622.0" y="571.75" font-size="5.6" fill="#343b4a" text-anchor="end" font-weight="normal" stroke="#343b4a" stroke-width="0.12">5</text>
<text x="666.7" y="571.75" font-size="5.6" fill="#343b4a" text-anchor="end" font-weight="normal" stroke="#343b4a" stroke-width="0.12">0</text>
<rect x="17.2" y="587.30" width="701.8" height="0.8" fill="#e3e7ee"/>
<text x="21.2" y="583.6" font-size="5.7" fill="#2f6fc0" text-anchor="start" font-weight="normal" stroke="#2f6fc0" stroke-width="0.12" textLength="26.89848" lengthAdjust="spacingAndGlyphs">Job-6202...</text>
<text x="75.4" y="583.6" font-size="5.7" fill="#343b4a" text-anchor="start" font-weight="normal" stroke="#343b4a" stroke-width="0.12" textLength="25.998168" lengthAdjust="spacingAndGlyphs">Completed</text>
<text x="131" y="583.6" font-size="5.7" fill="#343b4a" text-anchor="start" font-weight="normal" stroke="#343b4a" stroke-width="0.12" textLength="17.335583999999997" lengthAdjust="spacingAndGlyphs">Update</text>
<text x="183.3" y="583.6" font-size="5.7" fill="#343b4a" text-anchor="start" font-weight="normal" stroke="#343b4a" stroke-width="0.12" textLength="25.1" lengthAdjust="spacingAndGlyphs">01 - PROD</text>
<text x="236.6" y="583.6" font-size="5.7" fill="#343b4a" text-anchor="start" font-weight="normal" stroke="#343b4a" stroke-width="0.12" textLength="62.3" lengthAdjust="spacingAndGlyphs">Commit Anonymized Data</text>
<text x="372.1" y="583.6" font-size="5.7" fill="#343b4a" text-anchor="start" font-weight="normal" stroke="#343b4a" stroke-width="0.12" textLength="63.66444" lengthAdjust="spacingAndGlyphs">2022-02-01T01:04:00.00...</text>
<text x="445.9" y="583.6" font-size="5.7" fill="#343b4a" text-anchor="start" font-weight="normal" stroke="#343b4a" stroke-width="0.12" textLength="63.66444" lengthAdjust="spacingAndGlyphs">2022-02-01T01:04:02.00...</text>
<text x="551.6" y="583.6" font-size="5.6" fill="#343b4a" text-anchor="end" font-weight="normal" stroke="#343b4a" stroke-width="0.12">0</text>
<text x="580.5" y="583.6" font-size="5.6" fill="#343b4a" text-anchor="end" font-weight="normal" stroke="#343b4a" stroke-width="0.12">0.03</text>
<text x="622.0" y="583.6" font-size="5.6" fill="#343b4a" text-anchor="end" font-weight="normal" stroke="#343b4a" stroke-width="0.12">9</text>
<text x="666.7" y="583.6" font-size="5.6" fill="#343b4a" text-anchor="end" font-weight="normal" stroke="#343b4a" stroke-width="0.12">0</text>
<rect x="17.2" y="599.15" width="701.8" height="0.8" fill="#e3e7ee"/>
<text x="21.2" y="595.45" font-size="5.7" fill="#2f6fc0" text-anchor="start" font-weight="normal" stroke="#2f6fc0" stroke-width="0.12" textLength="26.89848" lengthAdjust="spacingAndGlyphs">Job-6202...</text>
<text x="75.4" y="595.45" font-size="5.7" fill="#343b4a" text-anchor="start" font-weight="normal" stroke="#343b4a" stroke-width="0.12" textLength="25.998168" lengthAdjust="spacingAndGlyphs">Completed</text>
<text x="131" y="595.45" font-size="5.7" fill="#343b4a" text-anchor="start" font-weight="normal" stroke="#343b4a" stroke-width="0.12" textLength="17.93148" lengthAdjust="spacingAndGlyphs">Backup</text>
<text x="183.3" y="595.45" font-size="5.7" fill="#343b4a" text-anchor="start" font-weight="normal" stroke="#343b4a" stroke-width="0.12" textLength="25.1" lengthAdjust="spacingAndGlyphs">01 - PROD</text>
<text x="236.6" y="595.45" font-size="5.7" fill="#343b4a" text-anchor="start" font-weight="normal" stroke="#343b4a" stroke-width="0.12" textLength="91.6" lengthAdjust="spacingAndGlyphs">Contact data extraction (For deletion)</text>
<text x="372.1" y="595.45" font-size="5.7" fill="#343b4a" text-anchor="start" font-weight="normal" stroke="#343b4a" stroke-width="0.12" textLength="60.67454399999999" lengthAdjust="spacingAndGlyphs">2022-02-01T01:04:06.0...</text>
<text x="445.9" y="595.45" font-size="5.7" fill="#343b4a" text-anchor="start" font-weight="normal" stroke="#343b4a" stroke-width="0.12" textLength="60.67454399999999" lengthAdjust="spacingAndGlyphs">2022-02-01T01:04:09.0...</text>
<text x="551.6" y="595.45" font-size="5.6" fill="#343b4a" text-anchor="end" font-weight="normal" stroke="#343b4a" stroke-width="0.12">0</text>
<text x="580.5" y="595.45" font-size="5.6" fill="#343b4a" text-anchor="end" font-weight="normal" stroke="#343b4a" stroke-width="0.12">0.05</text>
<text x="622.0" y="595.45" font-size="5.6" fill="#343b4a" text-anchor="end" font-weight="normal" stroke="#343b4a" stroke-width="0.12">13</text>
<text x="666.7" y="595.45" font-size="5.6" fill="#343b4a" text-anchor="end" font-weight="normal" stroke="#343b4a" stroke-width="0.12">0</text>
<rect x="17.2" y="611.00" width="701.8" height="0.8" fill="#e3e7ee"/>
<text x="21.2" y="607.3000000000001" font-size="5.7" fill="#2f6fc0" text-anchor="start" font-weight="normal" stroke="#2f6fc0" stroke-width="0.12" textLength="26.89848" lengthAdjust="spacingAndGlyphs">Job-6202...</text>
<text x="75.4" y="607.3000000000001" font-size="5.7" fill="#343b4a" text-anchor="start" font-weight="normal" stroke="#343b4a" stroke-width="0.12" textLength="25.998168" lengthAdjust="spacingAndGlyphs">Completed</text>
<text x="131" y="607.3000000000001" font-size="5.7" fill="#343b4a" text-anchor="start" font-weight="normal" stroke="#343b4a" stroke-width="0.12" textLength="15.540083999999998" lengthAdjust="spacingAndGlyphs">Delete</text>
<text x="183.3" y="607.3000000000001" font-size="5.7" fill="#343b4a" text-anchor="start" font-weight="normal" stroke="#343b4a" stroke-width="0.12" textLength="25.1" lengthAdjust="spacingAndGlyphs">01 - PROD</text>
<text x="236.6" y="607.3000000000001" font-size="5.7" fill="#343b4a" text-anchor="start" font-weight="normal" stroke="#343b4a" stroke-width="0.12" textLength="125.1" lengthAdjust="spacingAndGlyphs">Delete Case Comments, Contact Attachments &amp; C...</text>
<text x="372.1" y="607.3000000000001" font-size="5.7" fill="#343b4a" text-anchor="start" font-weight="normal" stroke="#343b4a" stroke-width="0.12" textLength="63.66444" lengthAdjust="spacingAndGlyphs">2022-02-01T01:04:12.00...</text>
<text x="445.9" y="607.3000000000001" font-size="5.7" fill="#343b4a" text-anchor="start" font-weight="normal" stroke="#343b4a" stroke-width="0.12" textLength="63.66444" lengthAdjust="spacingAndGlyphs">2022-02-01T01:04:14.00...</text>
<text x="551.6" y="607.3000000000001" font-size="5.6" fill="#343b4a" text-anchor="end" font-weight="normal" stroke="#343b4a" stroke-width="0.12">0</text>
<text x="580.5" y="607.3000000000001" font-size="5.6" fill="#343b4a" text-anchor="end" font-weight="normal" stroke="#343b4a" stroke-width="0.12">0.03</text>
<text x="622.0" y="607.3000000000001" font-size="5.6" fill="#343b4a" text-anchor="end" font-weight="normal" stroke="#343b4a" stroke-width="0.12">6</text>
<text x="666.7" y="607.3000000000001" font-size="5.6" fill="#343b4a" text-anchor="end" font-weight="normal" stroke="#343b4a" stroke-width="0.12">0</text>
<rect x="17.2" y="622.85" width="701.8" height="0.8" fill="#e3e7ee"/>
<text x="21.2" y="619.1500000000001" font-size="5.7" fill="#2f6fc0" text-anchor="start" font-weight="normal" stroke="#2f6fc0" stroke-width="0.12" textLength="29.888375999999997" lengthAdjust="spacingAndGlyphs">Job-62021...</text>
<text x="75.4" y="619.1500000000001" font-size="5.7" fill="#343b4a" text-anchor="start" font-weight="normal" stroke="#343b4a" stroke-width="0.12" textLength="25.998168" lengthAdjust="spacingAndGlyphs">Completed</text>
<text x="131" y="619.1500000000001" font-size="5.7" fill="#343b4a" text-anchor="start" font-weight="normal" stroke="#343b4a" stroke-width="0.12" textLength="44.512356" lengthAdjust="spacingAndGlyphs">ForgetFromBack...</text>
<text x="183.3" y="619.1500000000001" font-size="5.7" fill="#343b4a" text-anchor="start" font-weight="normal" stroke="#343b4a" stroke-width="0.12" textLength="25.1" lengthAdjust="spacingAndGlyphs">01 - PROD</text>
<text x="236.6" y="619.1500000000001" font-size="5.7" fill="#343b4a" text-anchor="start" font-weight="normal" stroke="#343b4a" stroke-width="0.12" textLength="50.2" lengthAdjust="spacingAndGlyphs">Forget from backups</text>
<text x="372.1" y="619.1500000000001" font-size="5.7" fill="#343b4a" text-anchor="start" font-weight="normal" stroke="#343b4a" stroke-width="0.12" textLength="63.66444" lengthAdjust="spacingAndGlyphs">2022-02-01T01:04:17.00...</text>
<text x="445.9" y="619.1500000000001" font-size="5.7" fill="#343b4a" text-anchor="start" font-weight="normal" stroke="#343b4a" stroke-width="0.12" textLength="63.66444" lengthAdjust="spacingAndGlyphs">2022-02-01T01:04:19.00...</text>
<text x="551.6" y="619.1500000000001" font-size="5.6" fill="#343b4a" text-anchor="end" font-weight="normal" stroke="#343b4a" stroke-width="0.12">0</text>
<text x="580.5" y="619.1500000000001" font-size="5.6" fill="#343b4a" text-anchor="end" font-weight="normal" stroke="#343b4a" stroke-width="0.12">0.03</text>
<text x="622.0" y="619.1500000000001" font-size="5.6" fill="#343b4a" text-anchor="end" font-weight="normal" stroke="#343b4a" stroke-width="0.12">0</text>
<text x="666.7" y="619.1500000000001" font-size="5.6" fill="#343b4a" text-anchor="end" font-weight="normal" stroke="#343b4a" stroke-width="0.12">0</text>
<rect x="17.2" y="634.70" width="701.8" height="0.8" fill="#e3e7ee"/>
<text x="21.2" y="631.0" font-size="5.7" fill="#2f6fc0" text-anchor="start" font-weight="normal" stroke="#2f6fc0" stroke-width="0.12" textLength="26.89848" lengthAdjust="spacingAndGlyphs">Job-6202...</text>
<text x="75.4" y="631.0" font-size="5.7" fill="#343b4a" text-anchor="start" font-weight="normal" stroke="#343b4a" stroke-width="0.12" textLength="25.998168" lengthAdjust="spacingAndGlyphs">Completed</text>
<text x="131" y="631.0" font-size="5.7" fill="#343b4a" text-anchor="start" font-weight="normal" stroke="#343b4a" stroke-width="0.12" textLength="26.594063999999996" lengthAdjust="spacingAndGlyphs">ProjectRun</text>
<text x="183.3" y="631.0" font-size="5.7" fill="#343b4a" text-anchor="start" font-weight="normal" stroke="#343b4a" stroke-width="0.12">-</text>
<text x="236.6" y="631.0" font-size="5.7" fill="#343b4a" text-anchor="start" font-weight="normal" stroke="#343b4a" stroke-width="0.12" textLength="112.2" lengthAdjust="spacingAndGlyphs">D) GDPR PDATA LIFECYCLE: Scheduled Macro</text>
<text x="372.1" y="631.0" font-size="5.7" fill="#343b4a" text-anchor="start" font-weight="normal" stroke="#343b4a" stroke-width="0.12" textLength="63.66444" lengthAdjust="spacingAndGlyphs">2022-02-01T01:03:43.00...</text>
<text x="445.9" y="631.0" font-size="5.7" fill="#343b4a" text-anchor="start" font-weight="normal" stroke="#343b4a" stroke-width="0.12" textLength="63.66444" lengthAdjust="spacingAndGlyphs">2022-02-01T01:04:22.00...</text>
<text x="551.6" y="631.0" font-size="5.6" fill="#343b4a" text-anchor="end" font-weight="normal" stroke="#343b4a" stroke-width="0.12">0</text>
<text x="580.5" y="631.0" font-size="5.6" fill="#343b4a" text-anchor="end" font-weight="normal" stroke="#343b4a" stroke-width="0.12">0.65</text>
<text x="622.0" y="631.0" font-size="5.6" fill="#343b4a" text-anchor="end" font-weight="normal" stroke="#343b4a" stroke-width="0.12">0</text>
<text x="666.7" y="631.0" font-size="5.6" fill="#343b4a" text-anchor="end" font-weight="normal" stroke="#343b4a" stroke-width="0.12">0</text>
<rect x="17.2" y="646.55" width="701.8" height="0.8" fill="#e3e7ee"/>
<text x="21.2" y="642.85" font-size="5.7" fill="#2f6fc0" text-anchor="start" font-weight="normal" stroke="#2f6fc0" stroke-width="0.12" textLength="26.89848" lengthAdjust="spacingAndGlyphs">Job-6202...</text>
<text x="75.4" y="642.85" font-size="5.7" fill="#343b4a" text-anchor="start" font-weight="normal" stroke="#343b4a" stroke-width="0.12" textLength="25.998168" lengthAdjust="spacingAndGlyphs">Completed</text>
<text x="131" y="642.85" font-size="5.7" fill="#343b4a" text-anchor="start" font-weight="normal" stroke="#343b4a" stroke-width="0.12" textLength="17.93148" lengthAdjust="spacingAndGlyphs">Backup</text>
<text x="183.3" y="642.85" font-size="5.7" fill="#343b4a" text-anchor="start" font-weight="normal" stroke="#343b4a" stroke-width="0.12" textLength="20.9" lengthAdjust="spacingAndGlyphs">Odaseva</text>
<text x="236.6" y="642.85" font-size="5.7" fill="#343b4a" text-anchor="start" font-weight="normal" stroke="#343b4a" stroke-width="0.12" textLength="64.3" lengthAdjust="spacingAndGlyphs">All Binaries 4h incremental</text>
<text x="372.1" y="642.85" font-size="5.7" fill="#343b4a" text-anchor="start" font-weight="normal" stroke="#343b4a" stroke-width="0.12" textLength="60.67454399999999" lengthAdjust="spacingAndGlyphs">2022-02-01T01:46:49.0...</text>
<text x="445.9" y="642.85" font-size="5.7" fill="#343b4a" text-anchor="start" font-weight="normal" stroke="#343b4a" stroke-width="0.12" textLength="63.66444" lengthAdjust="spacingAndGlyphs">2022-02-01T01:46:55.00...</text>
<text x="551.6" y="642.85" font-size="5.6" fill="#343b4a" text-anchor="end" font-weight="normal" stroke="#343b4a" stroke-width="0.12">0</text>
<text x="580.5" y="642.85" font-size="5.6" fill="#343b4a" text-anchor="end" font-weight="normal" stroke="#343b4a" stroke-width="0.12">0.05</text>
<text x="622.0" y="642.85" font-size="5.6" fill="#343b4a" text-anchor="end" font-weight="normal" stroke="#343b4a" stroke-width="0.12">14</text>
<text x="666.7" y="642.85" font-size="5.6" fill="#343b4a" text-anchor="end" font-weight="normal" stroke="#343b4a" stroke-width="0.12">0</text>
<rect x="71.0" y="529.1" width="0.8" height="118" fill="#e3e7ee"/>
<rect x="126.6" y="529.1" width="0.8" height="118" fill="#e3e7ee"/>
<rect x="178.9" y="529.1" width="0.8" height="118" fill="#e3e7ee"/>
<rect x="232.2" y="529.1" width="0.8" height="118" fill="#e3e7ee"/>
<rect x="367.70000000000005" y="529.1" width="0.8" height="118" fill="#e3e7ee"/>
<rect x="441.5" y="529.1" width="0.8" height="118" fill="#e3e7ee"/>
<rect x="515.1" y="529.1" width="0.8" height="118" fill="#e3e7ee"/>
<rect x="555.5" y="529.1" width="0.8" height="118" fill="#e3e7ee"/>
<rect x="584.4" y="529.1" width="0.8" height="118" fill="#e3e7ee"/>
<rect x="625.9" y="529.1" width="0.8" height="118" fill="#e3e7ee"/>
<rect x="670.6" y="529.1" width="0.8" height="118" fill="#e3e7ee"/>
<rect x="16.8" y="529.1" width="0.8" height="118" fill="#e3e7ee"/>
</svg>
</body></html>
